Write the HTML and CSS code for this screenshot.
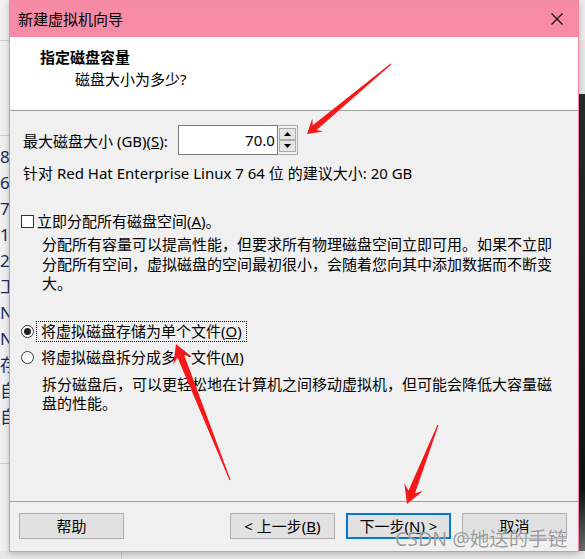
FILE: index.html
```html
<!DOCTYPE html>
<html lang="zh-CN">
<head>
<meta charset="utf-8">
<title>新建虚拟机向导</title>
<link rel="stylesheet" href="styles.css">
</head>
<body>
<div class="desktop">
  <div class="bg-left">
    <div class="bg-hline bg-h1"></div>
    <div class="bg-hline bg-h2"></div>
    <div class="bg-hline bg-h3"></div>
    <div class="bg-chars">
      <span>8</span><span>6</span><span>7</span><span>1</span><span>2</span><span>工</span><span>N</span><span>N</span><span>存</span><span>自</span><span>自</span>
    </div>
  </div>
  <div class="bg-right">
    <div class="bg-right-top"></div>
    <div class="bg-right-dark"></div>
  </div>
  <div class="bg-bottom"><div class="bg-vline"></div></div>

  <div class="dialog">
    <div class="titlebar">
      <span class="title">新建虚拟机向导</span>
      <svg class="close" width="12" height="12" viewBox="0 0 12 12"><path d="M0.5 0.5 L11.5 11.5 M11.5 0.5 L0.5 11.5" stroke="#000" stroke-width="1.1" fill="none"/></svg>
    </div>
    <div class="header">
      <div class="h-title">指定磁盘容量</div>
      <div class="h-sub">磁盘大小为多少?</div>
    </div>
    <div class="body">
      <div class="size-row">
        <span class="label">最大磁盘大小 (GB)(<u>S</u>):</span>
        <div class="spin">
          <div class="spin-text">70.0</div>
          <div class="spin-btns">
            <div class="spin-btn"><svg width="7" height="4" viewBox="0 0 7 4"><path d="M0 4 L3.5 0 L7 4 Z" fill="#000"/></svg></div>
            <div class="spin-btn"><svg width="7" height="4" viewBox="0 0 7 4"><path d="M0 0 L3.5 4 L7 0 Z" fill="#000"/></svg></div>
          </div>
        </div>
      </div>
      <div class="recommend">针对 Red Hat Enterprise Linux 7 64 位 的建议大小: 20 GB</div>
      <div class="check-row">
        <span class="checkbox"></span>
        <span class="opt-label">立即分配所有磁盘空间(<u>A</u>)。</span>
      </div>
      <p class="desc desc1">分配所有容量可以提高性能，但要求所有物理磁盘空间立即可用。如果不立即分配所有空间，虚拟磁盘的空间最初很小，会随着您向其中添加数据而不断变大。</p>
      <div class="radio-row r1">
        <span class="radio checked"></span>
        <span class="opt-label focus">将虚拟磁盘存储为单个文件(<u>O</u>)</span>
      </div>
      <div class="radio-row r2">
        <span class="radio"></span>
        <span class="opt-label">将虚拟磁盘拆分成多个文件(<u>M</u>)</span>
      </div>
      <p class="desc desc2">拆分磁盘后，可以更轻松地在计算机之间移动虚拟机，但可能会降低大容量磁盘的性能。</p>
    </div>
    <div class="footer">
      <button class="btn help">帮助</button>
      <button class="btn back">&lt; 上一步(<u>B</u>)</button>
      <button class="btn next">下一步(<u>N</u>) &gt;</button>
      <button class="btn cancel">取消</button>
    </div>
  </div>

  <svg class="arrows" width="585" height="559" viewBox="0 0 585 559">
    <polygon fill="#f5171a" points="390.7,63.6 312.8,125.3 312.3,118.5 307,134 323.2,131.6 316.6,129.9 391.3,64.4"/>
    <polygon fill="#f5171a" points="230.5,479.8 184.1,354.8 191.9,357.0 176,344 173.3,364.4 177.5,357.4 229.5,480.2"/>
    <polygon fill="#f5171a" points="437.5,424.8 408.5,490.6 404.3,483.6 407,504 422.9,490.9 415.0,493.2 438.5,425.2"/>
  </svg>

  <div class="watermark">CSDN @她送的手链</div>
</div>
</body>
</html>
```

FILE: styles.css
```css
* { box-sizing: border-box; }
html, body { margin: 0; padding: 0; }
body {
  font-family: "Noto Sans", "Noto Sans CJK SC", sans-serif;
  font-size: 15px;
  color: #000;
}
.desktop {
  position: relative;
  width: 585px;
  height: 559px;
  overflow: hidden;
  background: #f0f0f0;
}
.bg-left {
  position: absolute;
  left: 0; top: 0;
  width: 10px; height: 559px;
  overflow: hidden;
  background: #f0f0f0;
}
.bg-hline { position: absolute; left: 0; width: 10px; height: 1px; background: #cfcfcf; }
.bg-h1 { top: 40px; }
.bg-h2 { top: 135px; }
.bg-h3 { top: 463px; }
.bg-chars {
  position: absolute;
  left: 0; top: 144px;
  display: flex;
  flex-direction: column;
  line-height: 26px;
  font-size: 17px;
  color: #1c2a5c;
}
.bg-chars span { display: block; height: 26px; }
.bg-right {
  position: absolute;
  left: 579px; top: 0;
  width: 6px; height: 559px;
  display: flex;
  flex-direction: column;
}
.bg-right-top { height: 94px; background: #ececec; border-top: 40px solid #ececec; box-shadow: inset 0 -54px 0 #e6e6e6; }
.bg-right-dark { flex: 1; background: linear-gradient(#2a2a2a, #111 85%, #777); }
.bg-bottom {
  position: absolute;
  left: 0; top: 551px;
  width: 585px; height: 8px;
  background: #e8e8e8;
}
.bg-vline { position: absolute; left: 121px; top: 0; width: 1px; height: 8px; background: #c8c8c8; }

.dialog {
  position: absolute;
  left: 9px; top: 0;
  width: 570px; height: 552px;
  border: 1px solid #f28aa3;
  background: #f0f0f0;
  display: flex;
  flex-direction: column;
  box-shadow: 0 2px 6px rgba(0,0,0,0.22);
}
.titlebar {
  height: 36px;
  background: #f78aa4;
  display: flex;
  align-items: center;
  justify-content: space-between;
  padding: 0 15px 0 8px;
}
.title { font-size: 15px; line-height: 20px; }
.close { display: block; }
.header {
  height: 74px;
  background: #fff;
  border-bottom: 1px solid #a0a0a0;
  padding: 10px 0 0 30px;
}
.h-title { font-weight: bold; line-height: 20px; }
.h-sub { line-height: 20px; margin-top: 2px; padding-left: 35px; }

.body {
  flex: 1;
  padding: 14px 0 0 13px;
  border-bottom: 1px solid #a0a0a0;
}
.size-row { display: flex; align-items: center; height: 30px; }
.label { line-height: 20px; margin-right: 10px; position: relative; top: 1px; }
.spin { display: flex; height: 30px; }
.spin-text {
  width: 100px; height: 30px;
  background: #fff;
  border: 1px solid #7a7a7a;
  text-align: right;
  padding-right: 2px;
  line-height: 28px;
  font-size: 15px;
}
.spin-btns {
  width: 20px; height: 30px;
  border: 1px solid #adadad;
  border-left: none;
  background: #f0f0f0;
  display: flex;
  flex-direction: column;
  justify-content: space-between;
  padding: 2px 1px;
}
.spin-btn {
  height: 12px;
  border: 1px solid #adadad;
  background: #e5e5e5;
  display: flex;
  align-items: center;
  justify-content: center;
}
.spin-btn svg { display: block; }
.recommend { line-height: 20px; margin-top: 8px; }
.check-row, .radio-row { display: flex; align-items: center; height: 20px; margin-left: -2px; }
.check-row { margin-top: 28px; }
.checkbox {
  width: 13px; height: 13px;
  border: 1px solid #333;
  background: #fff;
  margin-right: 3px;
}
.radio {
  width: 13px; height: 13px;
  border: 1px solid #333;
  border-radius: 50%;
  background: #fff;
  margin-right: 2px;
  display: flex;
  align-items: center;
  justify-content: center;
}
.radio.checked::after {
  content: "";
  width: 7px; height: 7px;
  border-radius: 50%;
  background: #222;
}
.opt-label { line-height: 19px; }
.radio-row .opt-label { padding: 0 4px; border: 1px dotted transparent; }
.radio-row .opt-label.focus { border-color: #000; }
.desc {
  margin: 4px 0 0 19px;
  width: 510px;
  line-height: 19.5px;
  line-break: strict;
}
.r1 { margin-top: 28px; }
.r2 { margin-top: 6px; }
.desc2 { margin-top: 7px; }

.footer {
  height: 49px;
  display: flex;
  align-items: flex-start;
  padding: 11px 11px 0 9px;
}
.btn {
  font-family: inherit;
  font-size: 15px;
  color: #000;
  width: 105px;
  height: 26px;
  padding: 0;
  background: #e1e1e1;
  border: 1px solid #adadad;
  line-height: 22px;
}
.back { margin-left: auto; }
.next { margin-left: 11px; border: 2px solid #0078d7; }
.cancel { margin-left: 11px; }

.arrows { position: absolute; left: 0; top: 0; pointer-events: none; }
.watermark {
  position: absolute;
  left: 395px; top: 526px;
  font-family: "Noto Sans", "Noto Sans CJK SC", sans-serif;
  font-size: 19.5px;
  line-height: 26px;
  color: rgba(115,115,115,0.72);
  text-shadow: 0 0 1px #fff;
  white-space: nowrap;
}
```
